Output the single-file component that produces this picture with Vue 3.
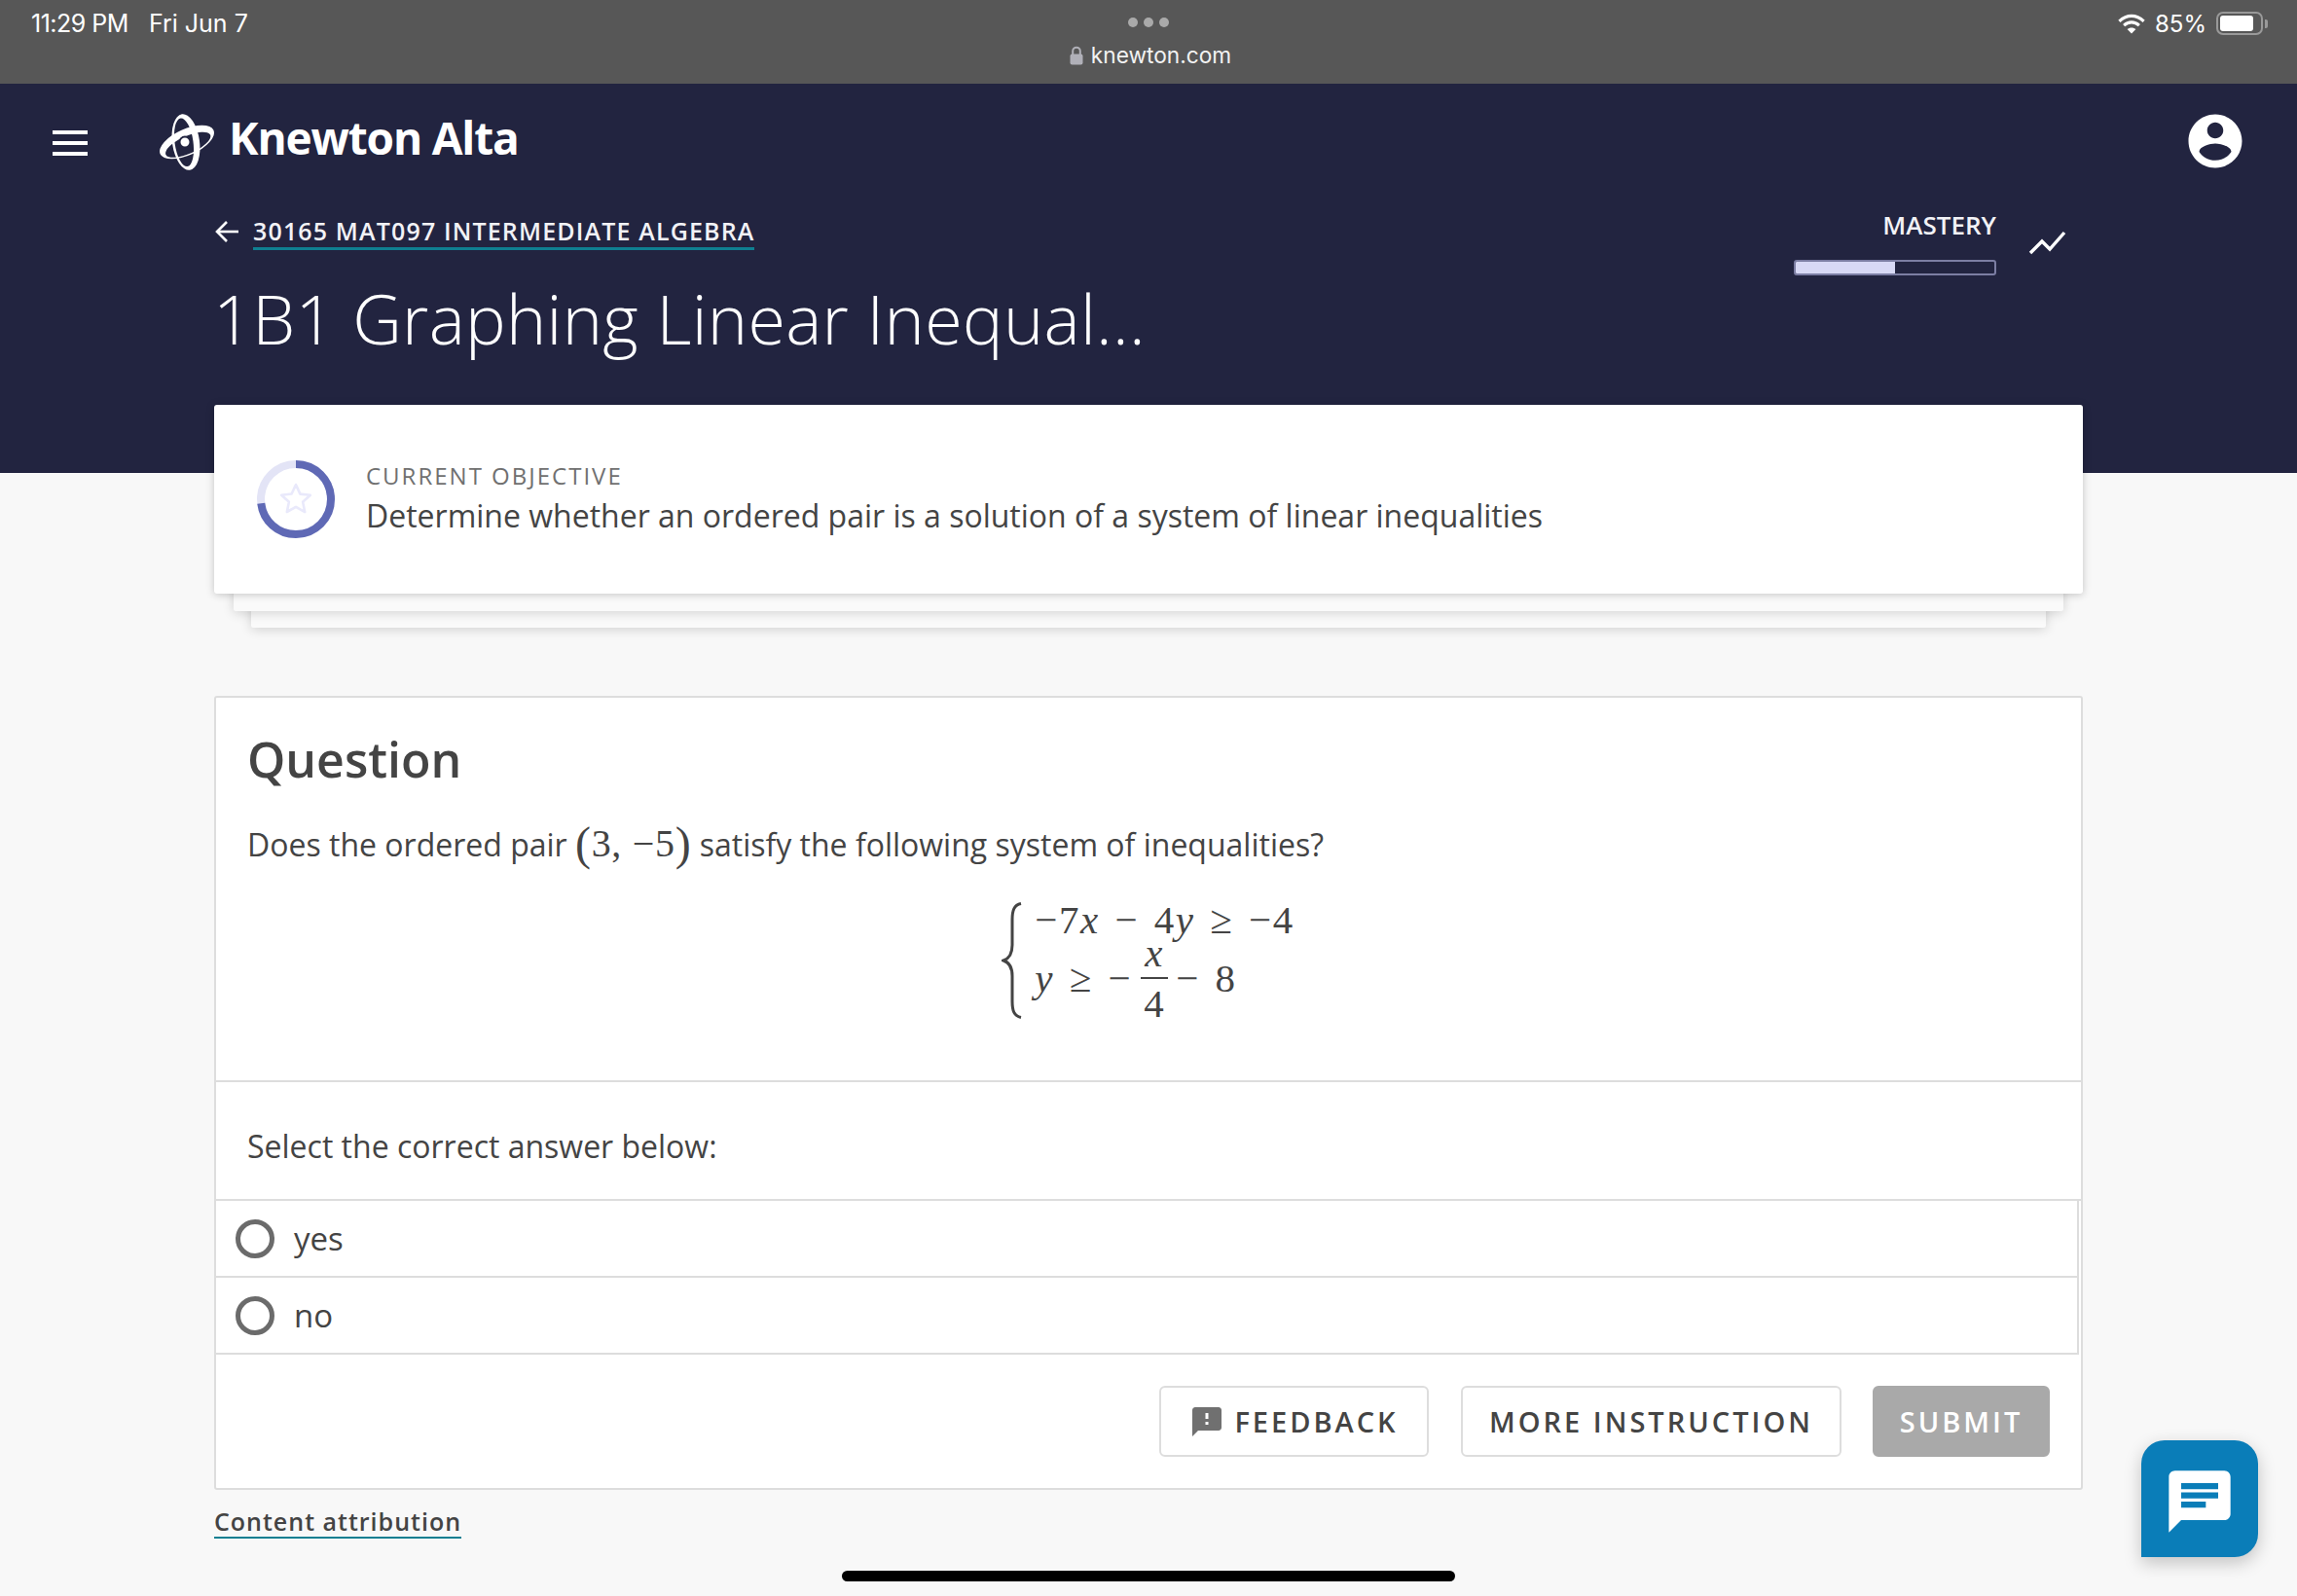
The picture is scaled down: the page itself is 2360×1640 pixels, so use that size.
<template>
  <div class="page">
    <!-- iOS status bar -->
    <div class="statusbar">
      <div class="status-left">
        <span class="time">11:29 PM</span>
        <span>Fri Jun 7</span>
      </div>
      <div class="status-mid">
        <div class="dots"><i></i><i></i><i></i></div>
        <div class="url">
          <svg width="14" height="20" viewBox="0 0 14 20">
            <path d="M3.2 9V5.5a3.8 3.8 0 0 1 7.6 0V9" fill="none" stroke="#b0b0b8" stroke-width="2" />
            <rect x="0.5" y="8.5" width="13" height="11" rx="2" fill="#b0b0b8" />
          </svg>
          knewton.com
        </div>
      </div>
      <div class="status-right">
        <svg width="30" height="21" viewBox="0 0 28 20" fill="none" stroke="#fff" stroke-width="3">
          <path d="M2 7.5C9.5 0.5 18.5 0.5 26 7.5" />
          <path d="M6.5 11.5C11 7.5 17 7.5 21.5 11.5" />
          <path d="M14 19.5L9.8 15.2C12 13.2 16 13.2 18.2 15.2Z" fill="#fff" stroke="none" />
        </svg>
        <span class="pct">85%</span>
        <div class="battery"><div class="battery-fill"></div></div>
        <div class="battery-nub"></div>
      </div>
    </div>

    <!-- Navy header -->
    <header class="hero">
      <div class="topnav">
        <div class="menu"><i></i><i></i><i></i></div>
        <svg class="logo" width="56" height="58" viewBox="0 0 56 58" fill="#fff">
          <path fill-rule="evenodd" transform="rotate(-24 28 29)"
            d="M-2 29a30 13.5 0 1 0 60 0a30 13.5 0 1 0-60 0Z M3 32a25 9 0 1 0 50 0a25 9 0 1 0-50 0Z" />
          <path fill-rule="evenodd" transform="rotate(-8 27 29)"
            d="M27 0a14 29 0 1 0 0 58a14 29 0 1 0 0-58Z M25 4a9.5 25 0 1 0 0 50a9.5 25 0 1 0 0-50Z" />
          <circle cx="26" cy="29" r="5.5" stroke="#222440" stroke-width="2" />
        </svg>
        <span class="brand">Knewton Alta</span>
        <svg class="account" width="66" height="66" viewBox="0 0 24 24" fill="#fff">
          <path d="M12 2C6.48 2 2 6.48 2 12s4.48 10 10 10 10-4.48 10-10S17.52 2 12 2zm0 3c1.66 0 3 1.34 3 3s-1.34 3-3 3-3-1.34-3-3 1.34-3 3-3zm0 14.2c-2.5 0-4.71-1.28-6-3.22.03-1.99 4-3.08 6-3.08 1.99 0 5.97 1.09 6 3.08-1.29 1.94-3.5 3.22-6 3.22z" />
        </svg>
      </div>
      <div class="course-row">
        <div class="course-left">
          <div class="back">
            <svg width="26" height="24" viewBox="0 0 26 24" fill="none" stroke="#fff" stroke-width="2.6">
              <path d="M25 12H3" />
              <path d="M13 2L3 12l10 10" />
            </svg>
            <a class="course-link">30165 MAT097 INTERMEDIATE ALGEBRA</a>
          </div>
          <h1>1B1 Graphing Linear Inequal...</h1>
        </div>
        <div class="mastery">
          <div class="mastery-col">
            <span class="mastery-label">MASTERY</span>
            <div class="mastery-bar"><div class="mastery-fill" :style="{ width: mastery + '%' }"></div></div>
          </div>
          <svg class="trend" width="40" height="32" viewBox="0 0 40 32" fill="none" stroke="#fff" stroke-width="3.4">
            <path d="M3 27l12-12 8 8L38 6" />
          </svg>
        </div>
      </div>
    </header>

    <main class="content">
      <!-- Objective card -->
      <section class="objective">
        <svg class="ring" width="80" height="80" viewBox="0 0 80 80">
          <circle cx="40" cy="40" r="36" fill="none" stroke="#e3e4f6" stroke-width="8" />
          <circle cx="40" cy="40" r="36" fill="none" stroke="#5f69b5" stroke-width="8"
            :stroke-dasharray="ringDash" transform="rotate(-90 40 40)" />
          <path d="M40 25l4.4 9.6 10.4 1.2-7.7 7 2.1 10.3L40 47.9 30.8 53l2.1-10.3-7.7-7 10.4-1.2z"
            fill="none" stroke="#e9e9fb" stroke-width="2.6" stroke-linejoin="round" />
        </svg>
        <div class="objective-text">
          <div class="objective-label">CURRENT OBJECTIVE</div>
          <div class="objective-desc">Determine whether an ordered pair is a solution of a system of linear inequalities</div>
        </div>
      </section>

      <!-- Question card -->
      <section class="question">
        <div class="q-top">
          <h2>Question</h2>
          <p class="q-text">
            Does the ordered pair <span class="pair"><span class="paren">(</span>3, −5<span class="paren">)</span></span> satisfy the following system of inequalities?
          </p>
          <div class="system">
            <svg class="brace" width="22" height="120" viewBox="0 0 22 120" fill="none" stroke="#444" stroke-width="3">
              <path d="M20 1.5C13 3 11 8 11 18V44C11 52 8 58 2 60C8 62 11 68 11 76V102C11 112 13 117 20 118.5" />
            </svg>
            <div class="eqs">
              <div class="eq eq-one">−7<em>x</em> − 4<em>y</em> ≥ −4</div>
              <div class="eq eq-two">
                <span><em>y</em> ≥ −</span>
                <span class="frac"><em>x</em><span class="frac-bar"></span><span>4</span></span>
                <span class="eq-tail">− 8</span>
              </div>
            </div>
          </div>
        </div>

        <div class="prompt">Select the correct answer below:</div>

        <label v-for="opt in options" :key="opt" class="option">
          <span class="radio"></span>
          <span>{{ opt }}</span>
        </label>

        <div class="actions">
          <button class="btn btn-feedback">
            <svg width="36" height="36" viewBox="0 0 24 24" fill="#707070">
              <path d="M20 2H4c-1.1 0-1.99.9-1.99 2L2 22l4-4h14c1.1 0 2-.9 2-2V4c0-1.1-.9-2-2-2zm-7 12h-2v-2h2v2zm0-4h-2V6h2v4z" />
            </svg>
            FEEDBACK
          </button>
          <button class="btn btn-more">MORE INSTRUCTION</button>
          <button class="btn btn-submit">SUBMIT</button>
        </div>
      </section>

      <a class="attribution">Content attribution</a>
    </main>

    <!-- Floating chat button -->
    <button class="chat-fab" aria-label="Chat">
      <svg width="76" height="76" viewBox="0 0 24 24" fill="#fff">
        <path d="M20 2H4c-1.1 0-1.99.9-1.99 2L2 22l4-4h14c1.1 0 2-.9 2-2V4c0-1.1-.9-2-2-2zM6 9h12v2H6V9zm8 5H6v-2h8v2zm4-6H6V6h12v2z" />
      </svg>
    </button>

    <div class="home-bar"></div>
  </div>
</template>

<script setup>
import { computed, ref } from 'vue'

const mastery = ref(50)
const objectiveProgress = ref(0.73)
const options = ['yes', 'no']

const ringDash = computed(() => {
  const len = 2 * Math.PI * 36
  return `${len * objectiveProgress.value} ${len}`
})
</script>

<style>
html, body {
  margin: 0;
  background: #f8f8f8;
}
</style>

<style scoped>
.page {
  position: relative;
  width: 2360px;
  height: 1640px;
  overflow: hidden;
  background: #f8f8f8;
  font-family: "Open Sans", "Liberation Sans", sans-serif;
  color: #444;
}

/* ── Status bar ── */
.statusbar {
  height: 86px;
  background: #575757;
  color: #fff;
  display: grid;
  grid-template-columns: 1fr auto 1fr;
  font-family: Inter, "Liberation Sans", sans-serif;
  font-size: 24px;
  box-sizing: border-box;
  padding: 10px 32px 0;
}
.status-left {
  display: flex;
  gap: 21px;
  line-height: 28px;
  font-size: 25px;
}
.time { letter-spacing: -0.5px; }
.status-mid {
  display: flex;
  flex-direction: column;
  align-items: center;
  gap: 14px;
  padding-top: 8px;
  padding-left: 4px;
}
.dots { display: flex; gap: 6px; margin-left: -4px; }
.dots i {
  width: 10px;
  height: 10px;
  border-radius: 50%;
  background: #aaa;
}
.url {
  display: flex;
  align-items: center;
  gap: 8px;
  line-height: 30px;
  font-size: 22.7px;
  color: #f2f2f2;
}
.status-right {
  display: flex;
  justify-content: flex-end;
  align-items: center;
  height: 28px;
  margin-right: -2px;
}
.pct { margin: 0 10px 0 9px; }
.battery {
  width: 48px;
  height: 24px;
  box-sizing: border-box;
  border: 2px solid #999;
  border-radius: 7px;
  padding: 2px;
}
.battery-fill {
  height: 100%;
  width: 86%;
  background: #fff;
  border-radius: 3px;
}
.battery-nub {
  width: 3px;
  height: 9px;
  margin-left: 2px;
  background: #999;
  border-radius: 0 2px 2px 0;
}

/* ── Header ── */
.hero {
  height: 400px;
  background: #222440;
  color: #fff;
  box-sizing: border-box;
}
.topnav {
  display: flex;
  align-items: center;
  height: 120px;
  padding: 0 51px 0 54px;
}
.menu {
  display: flex;
  flex-direction: column;
  gap: 7px;
  width: 36px;
  margin-right: 74px;
  margin-top: 2px;
}
.menu i {
  height: 4px;
  background: #fff;
}
.logo { margin-right: 15px; }
.brand {
  font-size: 46px;
  font-weight: 700;
  letter-spacing: -1.15px;
  margin-top: -11px;
}
.account { margin-left: auto; margin-top: -2px; }
.course-row {
  display: flex;
  justify-content: space-between;
  padding: 6px 237px 0 220px;
}
.back {
  display: flex;
  align-items: center;
  gap: 14px;
  height: 52px;
}
.course-link {
  font-size: 25px;
  font-weight: 600;
  letter-spacing: 1.15px;
  line-height: 34px;
  color: #f2f2f6;
  border-bottom: 3px solid #0f7f91;
}
h1 {
  margin: 18px 0 0 -1px;
  font-size: 70px;
  font-weight: 300;
  line-height: 90px;
  letter-spacing: 0.3px;
}
.mastery {
  display: flex;
  gap: 32px;
  margin-top: -5px;
  padding-top: 7px;
}
.mastery-col {
  display: flex;
  flex-direction: column;
  align-items: flex-end;
  gap: 19px;
}
.mastery-label {
  font-size: 26px;
  font-weight: 600;
  line-height: 34px;
  color: #f2f2f6;
}
.mastery-bar {
  width: 208px;
  height: 16px;
  box-sizing: border-box;
  border: 2px solid #7c7ea3;
  border-radius: 3px;
  overflow: hidden;
}
.mastery-fill {
  height: 100%;
  background: #d8d9f5;
}
.trend { margin-top: 19px; }

/* ── Main column ── */
.content {
  padding: 0 220px;
  margin-top: -70px;
  position: relative;
  isolation: isolate;
}
.objective {
  position: relative;
  height: 194px;
  display: flex;
  align-items: center;
  gap: 32px;
  padding-left: 44px;
  box-sizing: border-box;
  background: #fff;
  border-radius: 3px;
  box-shadow: 0 1px 8px rgba(0, 0, 0, 0.22);
}
/* the two sheets peeking out under the card */
.objective::before,
.objective::after {
  content: "";
  position: absolute;
  background: #fafafa;
  border-radius: 2px;
  box-shadow: 0 2px 12px rgba(0, 0, 0, 0.16);
}
.objective::before {
  left: 20px;
  right: 20px;
  bottom: -18px;
  height: 40px;
  z-index: -1;
}
.objective::after {
  left: 38px;
  right: 38px;
  bottom: -35px;
  height: 40px;
  z-index: -2;
}
.ring { flex-shrink: 0; }
.objective-label {
  font-size: 24px;
  letter-spacing: 2px;
  line-height: 34px;
  color: #707070;
}
.objective-desc {
  font-size: 32px;
  line-height: 48px;
  color: #444;
}
.question {
  margin-top: 105px;
  height: 816px;
  box-sizing: border-box;
  background: #fff;
  border: 2px solid #ddd;
  border-radius: 3px;
  display: flex;
  flex-direction: column;
}
.q-top {
  height: 395px;
  flex-shrink: 0;
  box-sizing: border-box;
  padding: 32px 33px 0 32px;
  border-bottom: 2px solid #ddd;
}
h2 {
  margin: 0;
  font-size: 50px;
  font-weight: 600;
  line-height: 62px;
  color: #444;
}
.q-text {
  margin: 28px 0 0;
  font-size: 32px;
  line-height: 56px;
  color: #444;
}
.pair {
  font-family: "Liberation Serif", serif;
  font-size: 40px;
  letter-spacing: 0.7px;
}
.paren { font-size: 48px; line-height: 1; vertical-align: -3px; }
.system {
  display: flex;
  justify-content: center;
  gap: 12px;
  margin-top: 31px;
  font-family: "Liberation Serif", serif;
  font-size: 41px;
  letter-spacing: 1.5px;
  word-spacing: 4px;
  color: #444;
}
.eqs { margin-top: -7px; }
.eq em { font-style: italic; }
.eq-one { line-height: 50px; }
.eq-two {
  display: flex;
  align-items: center;
  gap: 8px;
  margin-top: -16px;
}
.eq-tail { margin-left: -1px; }
.frac {
  display: inline-flex;
  flex-direction: column;
  align-items: center;
  line-height: 50px;
  width: 30px;
}
.frac-bar {
  width: 28px;
  height: 2px;
  background: #444;
}
.prompt {
  height: 122px;
  flex-shrink: 0;
  box-sizing: border-box;
  display: flex;
  align-items: center;
  padding: 11px 0 0 32px;
  font-size: 32px;
  color: #444;
  border-bottom: 2px solid #ddd;
}
.option {
  height: 79px;
  flex-shrink: 0;
  box-sizing: border-box;
  display: flex;
  align-items: center;
  gap: 20px;
  padding-left: 20px;
  border-bottom: 2px solid #ddd;
  border-right: 2px solid #ddd;
  margin-right: 2px;
  font-size: 33px;
}
.radio {
  width: 40px;
  height: 40px;
  box-sizing: border-box;
  border: 5px solid #6b6b6b;
  border-radius: 50%;
}
.actions {
  flex: 1;
  display: flex;
  justify-content: flex-end;
  gap: 32px;
  padding: 32px 32px 0 0;
}
.btn {
  height: 73px;
  box-sizing: border-box;
  display: flex;
  align-items: center;
  justify-content: center;
  gap: 10px;
  background: #fff;
  border: 2px solid #ddd;
  border-radius: 6px;
  font-family: inherit;
  font-size: 29px;
  font-weight: 600;
  letter-spacing: 3px;
  color: #444;
}
.btn-feedback { width: 277px; margin-right: 1px; }
.btn-more { width: 391px; }
.btn-submit {
  width: 182px;
  background: #a9a9a9;
  border-color: #a9a9a9;
  color: #fff;
}
.attribution {
  display: inline-block;
  margin-top: 16px;
  font-size: 25px;
  font-weight: 600;
  letter-spacing: 1px;
  line-height: 32px;
  color: #444;
  border-bottom: 2px solid #0f7f91;
}

/* ── Overlays ── */
.chat-fab {
  position: absolute;
  left: 2200px;
  top: 1480px;
  width: 120px;
  height: 120px;
  padding: 6px 0 0;
  border: none;
  border-radius: 24px 24px 24px 0;
  background: #0a7db8;
  box-shadow: 0 6px 18px rgba(0, 0, 0, 0.22);
  display: flex;
  align-items: center;
  justify-content: center;
}
.home-bar {
  position: absolute;
  left: 865px;
  top: 1614px;
  width: 630px;
  height: 11px;
  border-radius: 6px;
  background: #000;
}
</style>
